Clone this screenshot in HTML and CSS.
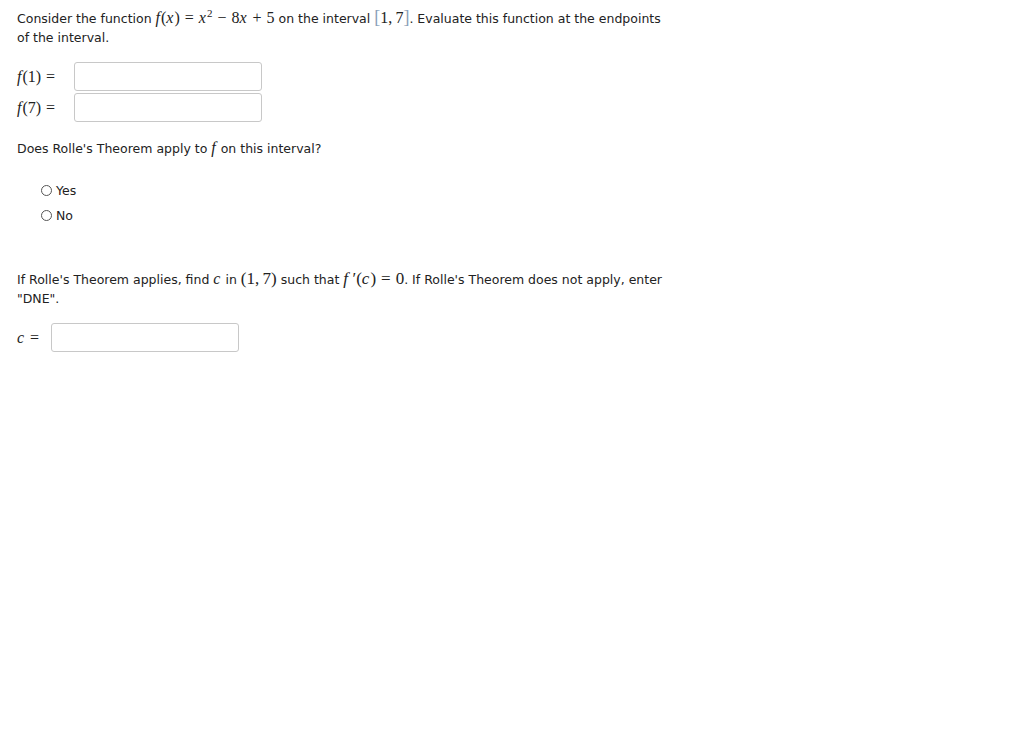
FILE: index.html
```html
<!DOCTYPE html>
<html lang="en">
<head>
  <meta charset="UTF-8">
  <title>Rolle's Theorem</title>
  <link rel="stylesheet" href="styles.css">
</head>
<body>
  <div class="question">
    <p class="intro">
      Consider the function <span class="m"><i>f</i>(<i>x</i>)<span class="op">=</span><i>x</i><sup>2</sup><span class="op">&minus;</span>8<i>x</i><span class="op">+</span>5</span>
      on the interval <span class="m"><span class="br">[</span>1,&thinsp;7<span class="br">]</span></span>. Evaluate this function at the endpoints
      of the interval.
    </p>

    <div class="answers">
      <div class="row">
        <span class="m lbl"><i>f</i>(1)<span class="op">=</span></span>
        <input type="text" class="box">
      </div>
      <div class="row">
        <span class="m lbl"><i>f</i>(7)<span class="op">=</span></span>
        <input type="text" class="box">
      </div>
    </div>

    <p class="ask">Does Rolle's Theorem apply to <span class="m"><i>f</i></span> on this interval?</p>

    <div class="choices">
      <label class="choice"><input type="radio" name="applies"> Yes</label>
      <label class="choice"><input type="radio" name="applies"> No</label>
    </div>

    <p class="find">
      If Rolle's Theorem applies, find <span class="m"><i>c</i></span> in <span class="m big">(1,&thinsp;7)</span> such that
      <span class="m big"><i>f</i>&thinsp;&prime;(<i>c</i>)<span class="op">=</span>0</span>. If Rolle's Theorem does not apply, enter
      "DNE".
    </p>

    <div class="row last">
      <span class="m lbl"><i>c</i><span class="op">=</span></span>
      <input type="text" class="box">
    </div>
  </div>
</body>
</html>
```

FILE: styles.css
```css
body {
  margin: 0;
  padding: 8px 17px;
  font-family: "DejaVu Sans", Tahoma, sans-serif;
  font-size: 12.5px;
  color: #222;
  background: #fff;
}

.question {
  width: 652px;
}

p {
  margin: 0;
  line-height: 19px;
}

.m {
  font-family: "Liberation Serif", "DejaVu Serif", serif;
  font-size: 16px;
  white-space: nowrap;
}

.m i {
  margin-right: 1px;
}

.op {
  margin: 0 5px;
}

.m sup {
  font-size: 11px;
  line-height: 0;
}

.br {
  color: #8aa0b8;
  font-size: 18px;
}

.big {
  font-size: 17px;
}

.answers {
  margin-top: 14px;
}

.row {
  display: flex;
  align-items: center;
  height: 31px;
}

.lbl {
  width: 57px;
}

.box {
  width: 188px;
  height: 29px;
  box-sizing: border-box;
  border: 1px solid #c8c8c8;
  border-radius: 3px;
  margin: 0;
}

.ask {
  margin-top: 15px;
}

.choices {
  margin-top: 25px;
  padding-left: 24px;
  display: flex;
  flex-direction: column;
  gap: 10px;
}

.choice {
  display: flex;
  align-items: center;
  gap: 4px;
}

.choice input {
  appearance: none;
  margin: 0;
  width: 11px;
  height: 11px;
  border: 1px solid #555;
  border-radius: 50%;
  background: #fff;
}

.find {
  margin-top: 46px;
}

.last {
  margin-top: 14px;
}

.last .lbl {
  width: 34px;
}
```
